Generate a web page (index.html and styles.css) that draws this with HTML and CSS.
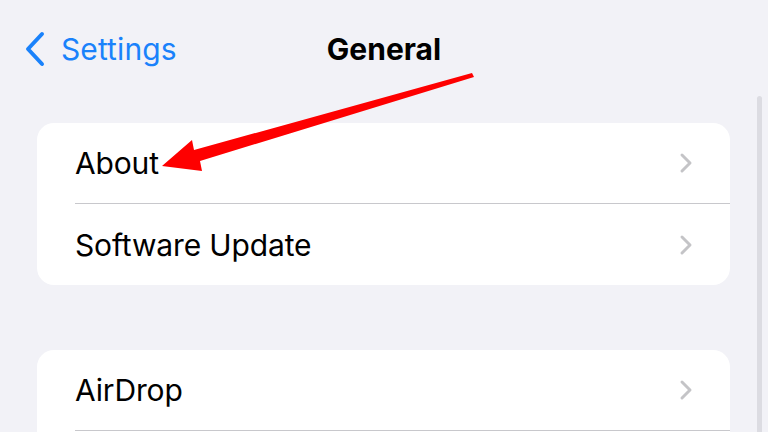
FILE: index.html
```html
<!DOCTYPE html>
<html>
<head>
<meta charset="utf-8">
<link rel="stylesheet" href="styles.css">
</head>
<body>
<div class="screen">
  <header class="nav">
    <a class="back">
      <svg class="back-icon" width="22" height="36" viewBox="0 0 22 36"><path d="M18 3 L4 18 L18 33" fill="none" stroke="#1a82fb" stroke-width="4" stroke-linecap="round" stroke-linejoin="round"/></svg>
      <span class="back-label">Settings</span>
    </a>
    <h1 class="title">General</h1>
  </header>
  <main class="content">
    <section class="card">
      <div class="row"><span class="label">About</span><svg class="chev" width="14" height="22" viewBox="0 0 14 22"><path d="M3 3 L11 11 L3 19" fill="none" stroke="#c4c4c7" stroke-width="3" stroke-linecap="round" stroke-linejoin="round"/></svg></div>
      <div class="row"><span class="label">Software Update</span><svg class="chev" width="14" height="22" viewBox="0 0 14 22"><path d="M3 3 L11 11 L3 19" fill="none" stroke="#c4c4c7" stroke-width="3" stroke-linecap="round" stroke-linejoin="round"/></svg></div>
    </section>
    <section class="card">
      <div class="row"><span class="label">AirDrop</span><svg class="chev" width="14" height="22" viewBox="0 0 14 22"><path d="M3 3 L11 11 L3 19" fill="none" stroke="#c4c4c7" stroke-width="3" stroke-linecap="round" stroke-linejoin="round"/></svg></div>
      <div class="row"></div>
    </section>
  </main>
  <div class="scrollbar"></div>
  <svg class="arrow" width="768" height="432" viewBox="0 0 768 432"><polygon points="162,166 192,140 194,150 472,73 474,77 200,161 202,171" fill="#fe0000"/></svg>
</div>
</body>
</html>
```
FILE: styles.css
```css
html, body {
  margin: 0;
  padding: 0;
  background: #f2f2f7;
}
.screen {
  position: relative;
  width: 768px;
  height: 432px;
  overflow: hidden;
  font-family: "Inter", "Liberation Sans", sans-serif;
  color: #000;
}
.nav {
  position: relative;
  height: 100px;
  display: flex;
  align-items: flex-start;
}
.back {
  display: flex;
  align-items: center;
  gap: 15px;
  margin: 31px 0 0 24px;
  color: #1a82fb;
}
.back-icon {
  display: block;
}
.back-label {
  font-size: 30px;
  line-height: 36px;
  letter-spacing: 0.1px;
}
.title {
  position: absolute;
  left: 0;
  right: 0;
  top: 31px;
  margin: 0;
  text-align: center;
  font-size: 30px;
  line-height: 36px;
  font-weight: 700;
  letter-spacing: 0;
}
.content {
  display: flex;
  flex-direction: column;
  gap: 65px;
  padding: 23px 38px 0 37px;
}
.card {
  background: #fff;
  border-radius: 17px;
  padding-left: 38px;
}
.row {
  height: 81px;
  box-sizing: border-box;
  display: flex;
  align-items: center;
  justify-content: space-between;
  padding-right: 37px;
  border-bottom: 1px solid #c8c8cc;
}
.row:last-child {
  border-bottom: none;
}
.label {
  font-size: 30px;
  letter-spacing: -0.15px;
}
.chev {
  display: block;
}
.scrollbar {
  position: absolute;
  left: 757px;
  top: 96px;
  width: 5px;
  height: 340px;
  border-radius: 3px;
  background: #dcdce2;
}
.arrow {
  position: absolute;
  left: 0;
  top: 0;
}
```
